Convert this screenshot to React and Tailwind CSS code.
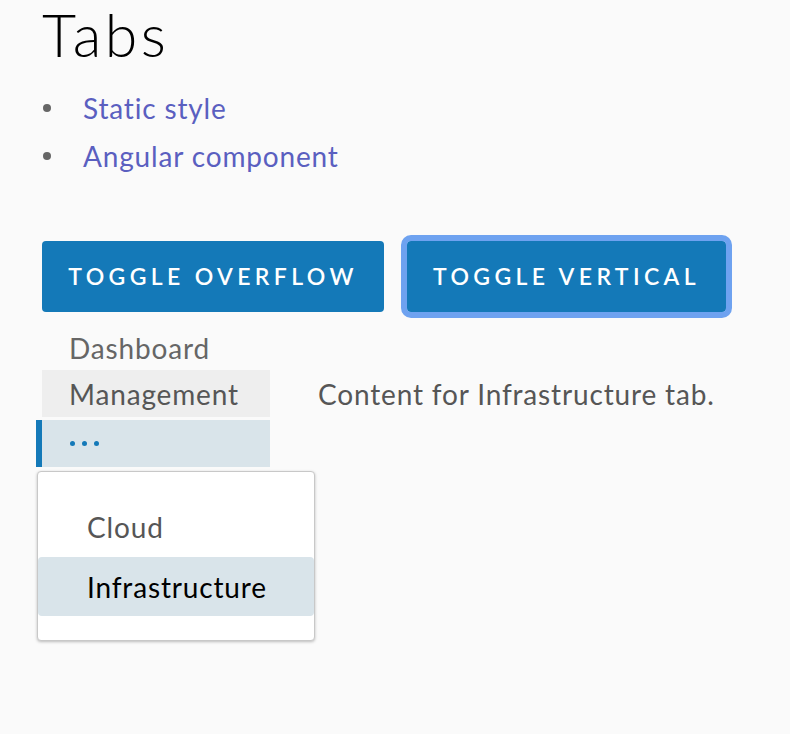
import { useState } from "react";

const font = { fontFamily: "Lato, 'Open Sans', sans-serif" };

export default function App() {
  const [active] = useState("Infrastructure");

  return (
    <div
      className="min-h-[734px] w-full bg-[#fafafa] pl-[42px] pt-[3px] text-[#565656]"
      style={font}
    >
      <h1 className="text-[59px] font-light leading-[64px] tracking-[0.06em] text-black">Tabs</h1>

      <ul className="mt-[23px] flex flex-col gap-[12px] text-[28px] leading-[36px] tracking-[0.03em] text-[#5a5fc0]">
        <li className="flex items-center">
          <span className="ml-[1px] mr-[32px] h-[8px] w-[8px] rounded-full bg-[#666]" />
          <a href="#static">Static style</a>
        </li>
        <li className="flex items-center">
          <span className="ml-[1px] mr-[32px] h-[8px] w-[8px] rounded-full bg-[#666]" />
          <a href="#angular">Angular component</a>
        </li>
      </ul>

      <div className="mt-[67px] flex items-center gap-[23px]">
        <button className="h-[71px] w-[342px] rounded-[4px] bg-[#1479b8] text-[23px] font-semibold uppercase tracking-[0.19em] text-white">
          Toggle overflow
        </button>
        <button className="h-[71px] w-[319px] rounded-[4px] bg-[#1479b8] text-[23px] font-semibold uppercase tracking-[0.19em] text-white outline outline-[6px] outline-[#6ea2f0] ring-[2px] ring-[#b9d3fa]">
          Toggle vertical
        </button>
      </div>

      <div className="mt-[11px] flex text-[28px] tracking-[0.03em]">
        <div className="relative w-[228px]">
          <div className="flex h-[47px] items-center pl-[27px] pt-[3px] text-[#666]">Dashboard</div>
          <div className="flex h-[47px] items-center bg-[#eeeeee] pl-[27px] text-[#565656]">
            Management
          </div>
          <div className="relative mt-[3px] flex h-[47px] items-center bg-[#d9e4ea] pl-[28px]">
            <span className="absolute -left-[6px] top-0 h-full w-[6px] bg-[#1479b8]" />
            <div className="flex gap-[7px]">
              <span className="h-[5px] w-[5px] rounded-full bg-[#1479b8]" />
              <span className="h-[5px] w-[5px] rounded-full bg-[#1479b8]" />
              <span className="h-[5px] w-[5px] rounded-full bg-[#1479b8]" />
            </div>
          </div>

          <div className="absolute left-[-5px] top-[148px] w-[278px] rounded-[4px] border border-[#c8c8c8] bg-white pb-[24px] pt-[30px] shadow-[0_1px_3px_rgba(0,0,0,0.25)]">
            <div className="flex h-[50px] items-center pl-[49px] text-[#565656]">Cloud</div>
            <div
              className={
                "mt-[5px] flex h-[59px] items-center rounded-[4px] pl-[49px] " +
                (active === "Infrastructure" ? "bg-[#d9e4ea] text-black" : "text-[#565656]")
              }
            >
              Infrastructure
            </div>
          </div>
        </div>

        <div className="pl-[48px] pt-[47px]">
          <p className="flex h-[47px] items-center">Content for Infrastructure tab.</p>
        </div>
      </div>
    </div>
  );
}
